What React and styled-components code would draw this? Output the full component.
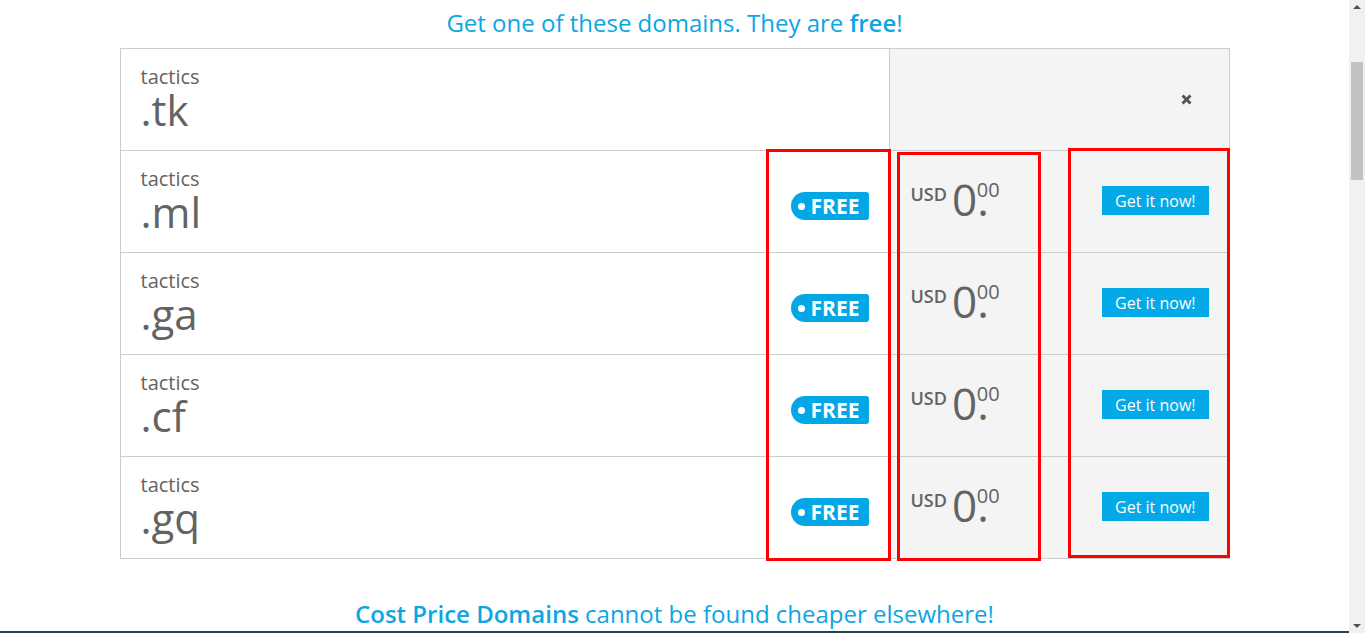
import React from 'react';
import styled, { createGlobalStyle } from 'styled-components';

const GlobalStyle = createGlobalStyle`
  html, body {
    margin: 0;
    padding: 0;
    background: #fff;
    font-family: "Open Sans", "DejaVu Sans", sans-serif;
    overflow: hidden;
  }
`;

const Page = styled.div`
  display: flex;
  flex-direction: column;
  align-items: center;
  width: 1349px;
`;

const Heading = styled.h2`
  margin: 0;
  height: 48px;
  line-height: 46px;
  font-size: 24px;
  font-weight: 400;
  color: #0ba6e4;
  text-align: center;
  b {
    font-weight: 600;
  }
`;

const TableWrap = styled.div`
  position: relative;
  width: 1110px;
`;

const Table = styled.div`
  border: 1px solid #cccccc;
  border-bottom: none;
`;

const Row = styled.div`
  display: grid;
  grid-template-columns: 1fr 340px;
  height: 101px;
  border-bottom: 1px solid #cccccc;
`;

const NameCell = styled.div`
  display: flex;
  justify-content: space-between;
  align-items: flex-start;
  padding: 16px 20px 0 20px;
  color: #636363;
`;

const Name = styled.div`
  display: flex;
  flex-direction: column;
`;

const Sld = styled.span`
  font-size: 20px;
  line-height: 24px;
`;

const Tld = styled.span`
  font-size: 42px;
  line-height: 42px;
`;

const FreeBadge = styled.span`
  display: flex;
  align-items: center;
  gap: 6px;
  margin-top: 25px;
  height: 28px;
  width: 78px;
  box-sizing: border-box;
  padding-left: 7px;
  border-radius: 14px 3px 3px 14px;
  background: #04a7e6;
  color: #fff;
  font-size: 21px;
  font-weight: 700;
  line-height: 28px;
  &::before {
    content: '';
    width: 7px;
    height: 7px;
    border-radius: 50%;
    background: #fff;
  }
`;

const PriceCell = styled.div`
  display: flex;
  justify-content: space-between;
  align-items: ${p => (p.$head ? 'center' : 'flex-start')};
  padding: 0 ${p => (p.$head ? '37px' : '20px')} 0 21px;
  background: #f4f4f4;
  border-left: 1px solid #cccccc;
`;

const Price = styled.div`
  display: flex;
  align-items: flex-start;
  margin-top: 26px;
  color: #636363;
`;

const Currency = styled.span`
  margin: 8px 5px 0 0;
  font-size: 18px;
  font-weight: 600;
  line-height: 18px;
`;

const Whole = styled.span`
  font-size: 44px;
  line-height: 44px;
`;

const Cents = styled.sup`
  margin: 3px 0 0 -12px;
  font-size: 20px;
  line-height: 20px;
  vertical-align: baseline;
`;

const Button = styled.button`
  margin-top: 35px;
  height: 29px;
  padding: 0 13px;
  border: none;
  border-radius: 0;
  background: #04a9e7;
  color: #fff;
  font-family: "Open Sans", sans-serif;
  font-size: 16px;
  cursor: pointer;
`;

const Close = styled.button`
  display: flex;
  padding: 0;
  border: none;
  background: none;
  cursor: pointer;
`;

const Mark = styled.div`
  position: absolute;
  box-sizing: border-box;
  border: 3px solid #ff0000;
  pointer-events: none;
`;

const Note = styled.p`
  margin: 0;
  padding: 40px 0 2px;
  font-size: 24px;
  line-height: 30px;
  color: #0ba6e4;
  text-align: center;
  b {
    font-weight: 600;
  }
`;

const Footer = styled.footer`
  align-self: stretch;
  height: 260px;
  background: #1d4556;
`;

const Scrollbar = styled.div`
  position: fixed;
  top: 0;
  right: 0;
  bottom: 0;
  width: 16px;
  background: #f1f1f1;
`;

const Arrow = styled.div`
  position: absolute;
  left: 4px;
  width: 0;
  height: 0;
  border-left: 4px solid transparent;
  border-right: 4px solid transparent;
  ${p => (p.$down ? 'bottom: 5px; border-top: 4px solid #505050;' : 'top: 5px; border-bottom: 4px solid #505050;')}
`;

const Thumb = styled.div`
  position: absolute;
  left: 2px;
  right: 2px;
  top: 62px;
  height: 118px;
  background: #c1c1c1;
`;

const domains = ['.ml', '.ga', '.cf', '.gq'];

const marks = [
  { left: 646, top: 101, width: 125, height: 412 },
  { left: 777, top: 104, width: 144, height: 409 },
  { left: 948, top: 100, width: 162, height: 410 },
];

const App = () => {
  return (
    <>
      <GlobalStyle />
      <Page>
        <Heading>
          Get one of these domains. They are <b>free</b>!
        </Heading>
        <TableWrap>
          <Table>
            <Row>
              <NameCell>
                <Name>
                  <Sld>tactics</Sld>
                  <Tld>.tk</Tld>
                </Name>
              </NameCell>
              <PriceCell $head>
                <span />
                <Close aria-label="close">
                  <svg width="11" height="11" viewBox="0 0 11 11">
                    <path d="M1.5 1.5 L9.5 9.5 M9.5 1.5 L1.5 9.5" stroke="#555" strokeWidth="3" />
                  </svg>
                </Close>
              </PriceCell>
            </Row>
            {domains.map(d => (
              <Row key={d}>
                <NameCell>
                  <Name>
                    <Sld>tactics</Sld>
                    <Tld>{d}</Tld>
                  </Name>
                  <FreeBadge>FREE</FreeBadge>
                </NameCell>
                <PriceCell>
                  <Price>
                    <Currency>USD</Currency>
                    <Whole>0</Whole>
                    <Whole>.</Whole>
                    <Cents>00</Cents>
                  </Price>
                  <Button>Get it now!</Button>
                </PriceCell>
              </Row>
            ))}
          </Table>
          {marks.map((m, i) => (
            <Mark key={i} style={m} />
          ))}
        </TableWrap>
        <Note>
          <b>Cost Price Domains</b> cannot be found cheaper elsewhere!
        </Note>
        <Footer />
      </Page>
      <Scrollbar>
        <Arrow />
        <Thumb />
        <Arrow $down />
      </Scrollbar>
    </>
  );
};

export default App;
